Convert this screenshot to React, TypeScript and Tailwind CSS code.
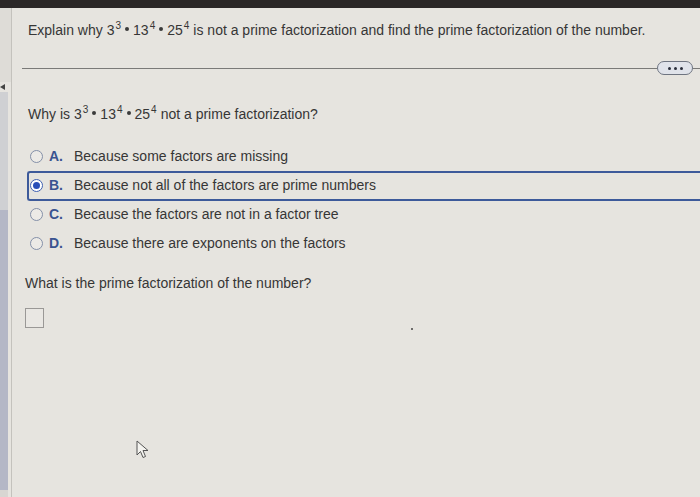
import React from "react";

const Sup = ({ children }: { children: React.ReactNode }) => (
  <sup className="text-[10px] relative top-[-6px] ml-[1px]">{children}</sup>
);

const Dot = () => <span className="inline-block w-[4px] h-[4px] rounded-full bg-[#3a3a3a] relative top-[-4px]" />;

const Expr = () => (
  <span className="inline-flex items-baseline gap-[4px] mx-[4px]">
    <span>
      3<Sup>3</Sup>
    </span>
    <Dot />
    <span>
      13<Sup>4</Sup>
    </span>
    <Dot />
    <span>
      25<Sup>4</Sup>
    </span>
  </span>
);

const Radio = ({ checked }: { checked?: boolean }) =>
  checked ? (
    <span className="w-[13px] h-[13px] rounded-full border-[1.5px] border-[#3f5fb0] bg-white flex items-center justify-center shrink-0">
      <span className="w-[7px] h-[7px] rounded-full bg-[#2a4fb8]" />
    </span>
  ) : (
    <span className="w-[13px] h-[13px] rounded-full border-[1.5px] border-[#8490a8] bg-[#eceae6] shrink-0" />
  );

const options = [
  { l: "A.", t: "Because some factors are missing" },
  { l: "B.", t: "Because not all of the factors are prime numbers", c: true },
  { l: "C.", t: "Because the factors are not in a factor tree" },
  { l: "D.", t: "Because there are exponents on the factors" },
];

export default function App() {
  return (
    <div className="w-[700px] h-[497px] flex flex-col bg-[#e6e4df] overflow-hidden relative text-[#363636] font-['Liberation_Sans',Arial,sans-serif] text-[14px]">
      <div className="h-[8px] bg-[#2b2727] shrink-0" />
      <div className="flex flex-1">
        <aside className="w-[12px] shrink-0 border-r border-[#c4c2bd] flex flex-col">
          <div className="h-[74px] bg-[#dedcd7]" />
          <div className="h-[10px] flex items-center">
            <span className="block w-0 h-0 border-y-[3px] border-y-transparent border-r-[5px] border-r-[#444]" />
          </div>
          <div className="h-[118px] bg-[#cfd0d3] mr-[3px]" />
          <div className="h-[280px] bg-[#b4b7c6] mr-[3px]" />
          <div className="flex-1 bg-[#d8d6d2] mr-[3px]" />
        </aside>
        <main className="flex-1 flex flex-col">
          <div className="pl-[16px] pt-[14px] h-[53px] leading-[17px]">
            Explain why
            <Expr />
            is not a prime factorization and find the prime factorization of the number.
          </div>
          <div className="flex items-center ml-[10px] h-[14px]">
            <div className="flex-1 h-px bg-[#7a7a78]" />
            <div className="w-[36px] h-[14px] rounded-full border border-[#6e7480] bg-[#e0e3ea] flex items-center justify-center gap-[3px] shrink-0">
              <span className="w-[3px] h-[3px] rounded-full bg-[#2a2f3c]" />
              <span className="w-[3px] h-[3px] rounded-full bg-[#2a2f3c]" />
              <span className="w-[3px] h-[3px] rounded-full bg-[#2a2f3c]" />
            </div>
            <div className="w-[7px] h-px bg-[#7a7a78]" />
          </div>
          <div className="pl-[16px] pt-[31px] h-[48px] leading-[17px]">
            Why is
            <Expr />
            not a prime factorization?
          </div>
          <div className="flex flex-col pt-[19px] pl-[15px]">
            {options.map((o) => (
              <div
                key={o.l}
                className={
                  o.c
                    ? "h-[30px] -my-[0.5px] flex items-center pl-[1px] border-2 border-r-0 border-[#3d5a9a] rounded-l-[3px]"
                    : "h-[29px] flex items-center pl-[3px]"
                }
              >
                <Radio checked={o.c} />
                <span className="ml-[6px] w-[25px] font-bold text-[#3a5390]">{o.l}</span>
                <span>{o.t}</span>
              </div>
            ))}
          </div>
          <div className="pl-[13px] pt-[17px] leading-[17px]">What is the prime factorization of the number?</div>
          <div className="ml-[13px] mt-[16px] w-[19px] h-[20px] border border-[#9a9896] bg-[#e9e7e3]" />
        </main>
      </div>
      <span className="absolute left-[411px] top-[328px] w-[2px] h-[2px] rounded-full bg-[#444]" />
      <svg className="absolute left-[136px] top-[440px]" width="14" height="20" viewBox="0 0 14 20">
        <path
          d="M1 1 L1 15 L4.5 11.5 L7 17.5 L9.5 16.5 L7 10.5 L12 10.5 Z"
          fill="#f4f3ef"
          stroke="#555"
          strokeWidth="1"
          strokeLinejoin="round"
        />
      </svg>
    </div>
  );
}
